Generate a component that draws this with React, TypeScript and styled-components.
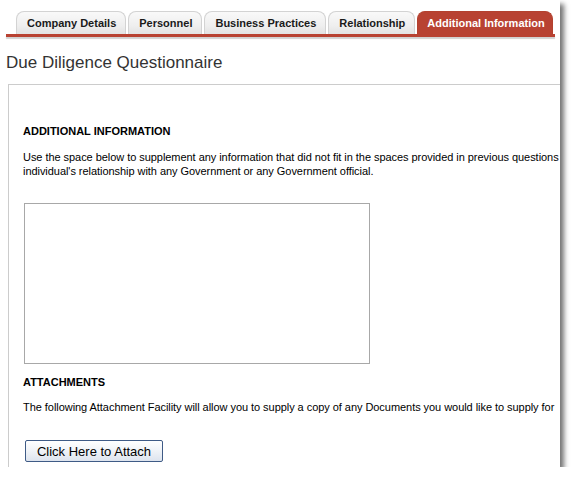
import React from "react";
import styled, { createGlobalStyle } from "styled-components";

const Global = createGlobalStyle`
  html, body { margin: 0; padding: 0; background: #ffffff; }
  body { font-family: "Liberation Sans", Arial, sans-serif; }
`;

const Window = styled.div`
  position: relative;
  width: 560px;
  height: 467px;
  background: #ffffff;
  overflow: hidden;
  box-shadow: 4px 4px 5px rgba(0, 0, 0, 0.55);
`;

const TabBar = styled.div`
  display: flex;
  align-items: flex-end;
  gap: 2px;
  height: 34px;
  padding-left: 16px;
  box-sizing: border-box;
`;

const Tab = styled.div<{ $active?: boolean }>`
  height: 23px;
  box-sizing: border-box;
  padding: 0 9px 0 10px;
  display: flex;
  align-items: center;
  font-family: "Liberation Sans", Arial, sans-serif;
  font-weight: bold;
  font-size: 11px;
  white-space: nowrap;
  border: 1px solid ${(p) => (p.$active ? "#b3412f" : "#d3d3d3")};
  border-bottom: none;
  border-radius: 8px 8px 0 0;
  color: ${(p) => (p.$active ? "#ffffff" : "#1a1a1a")};
  background: ${(p) =>
    p.$active
      ? "#b84232"
      : "linear-gradient(to bottom, #f9f9f9 0%, #efefef 60%, #e3e3e3 100%)"};
  &:last-child {
    padding: 0 7px 0 9px;
  }
`;

const RedBar = styled.div`
  margin-left: 6px;
  width: 549px;
  height: 3px;
  background: #b84232;
  box-shadow: 0 2px 1px rgba(0, 0, 0, 0.18);
`;

const Heading = styled.h1`
  margin: 16px 0 0 6px;
  font-family: "Liberation Sans", Arial, sans-serif;
  font-weight: normal;
  font-size: 17px;
  line-height: 20px;
  color: #333333;
`;

const Panel = styled.div`
  margin: 11px 0 0 8px;
  width: 640px;
  height: 400px;
  border-top: 1px solid #cccccc;
  border-left: 1px solid #cccccc;
  padding: 39px 0 0 14px;
  box-sizing: border-box;
  font-family: "Liberation Sans", Arial, sans-serif;
  font-size: 11px;
  line-height: 14px;
  color: #000000;
`;

const SectionTitle = styled.div<{ $top?: number }>`
  font-weight: bold;
  margin-top: ${(p) => p.$top ?? 0}px;
`;

const Paragraph = styled.div<{ $top?: number }>`
  margin-top: ${(p) => p.$top ?? 0}px;
  white-space: nowrap;
  letter-spacing: -0.05px;
`;

const TextBox = styled.textarea`
  display: block;
  margin: 25px 0 0 1px;
  width: 346px;
  height: 161px;
  box-sizing: border-box;
  border: 1px solid #a8a8a8;
  resize: none;
  outline: none;
  padding: 2px;
  font-family: "Liberation Sans", Arial, sans-serif;
`;

const AttachButton = styled.button`
  display: block;
  margin: 26px 0 0 2px;
  width: 138px;
  height: 22px;
  box-sizing: border-box;
  padding: 0;
  border: 1px solid #3f5b86;
  border-radius: 2px;
  background: linear-gradient(to bottom, #ffffff 0%, #f1f4f8 45%, #dde4ee 100%);
  font-family: "Liberation Sans", Arial, sans-serif;
  font-size: 13px;
  color: #000000;
  cursor: pointer;
`;

const tabs = [
  "Company Details",
  "Personnel",
  "Business Practices",
  "Relationship",
  "Additional Information",
];

export default function App() {
  return (
    <>
      <Global />
      <Window>
        <TabBar>
          {tabs.map((t, i) => (
            <Tab key={t} $active={i === tabs.length - 1}>
              {t}
            </Tab>
          ))}
        </TabBar>
        <RedBar />
        <Heading>Due Diligence Questionnaire</Heading>
        <Panel>
          <SectionTitle>ADDITIONAL INFORMATION</SectionTitle>
          <Paragraph $top={12}>
            Use the space below to supplement any information that did not fit in the spaces provided in previous questions
            <br />
            individual's relationship with any Government or any Government official.
          </Paragraph>
          <TextBox />
          <SectionTitle $top={11}>ATTACHMENTS</SectionTitle>
          <Paragraph $top={11}>
            The following Attachment Facility will allow you to supply a copy of any Documents you would like to supply for
          </Paragraph>
          <AttachButton type="button">Click Here to Attach</AttachButton>
        </Panel>
      </Window>
    </>
  );
}
